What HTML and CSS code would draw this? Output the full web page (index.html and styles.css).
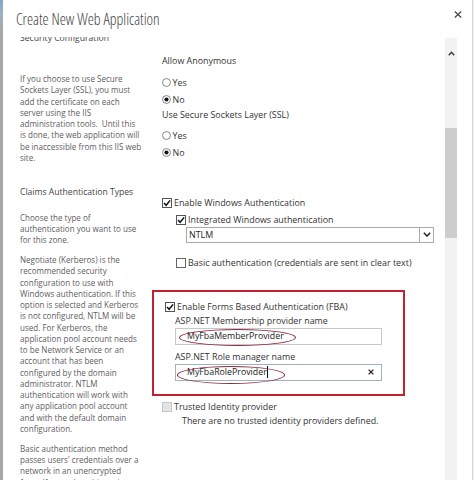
FILE: index.html
```html
<!DOCTYPE html>
<html lang="en">
<head>
<meta charset="utf-8">
<title>Create New Web Application</title>
<link rel="stylesheet" href="styles.css">
</head>
<body>
<div class="frame">
  <div class="edge-left"></div>
  <div class="dialog">
    <header class="dlg-head">
      <h1 class="dlg-title">Create New Web Application</h1>
      <svg class="close" viewBox="0 0 8 7" aria-label="Close"><path d="M0.8 0.5 L7.2 6.5 M7.2 0.5 L0.8 6.5" stroke="#4a4a4a" stroke-width="1.3" fill="none"/></svg>
    </header>
    <div class="dlg-body">
      <div class="viewport">
        <div class="scroller">
          <section class="sec sec-security">
            <div class="sec-left">
              <h2 class="sec-title">Security Configuration</h2>
              <p class="desc">If you choose to use Secure Sockets Layer (SSL), you must add the certificate on each server using the IIS administration tools.&nbsp; Until this is done, the web application will be inaccessible from this IIS web site.</p>
            </div>
            <div class="sec-right">
              <div class="label">Allow Anonymous</div>
              <div class="opts">
                <div class="opt"><svg class="rb" viewBox="0 0 10 10"><circle cx="5" cy="5" r="4.4" fill="#fff" stroke="#6a6a6a" stroke-width="0.9"/></svg>Yes</div>
                <div class="opt"><svg class="rb" viewBox="0 0 10 10"><circle cx="5" cy="5" r="4.4" fill="#fff" stroke="#6a6a6a" stroke-width="0.9"/><circle cx="5" cy="5" r="2.3" fill="#111"/></svg>No</div>
              </div>
              <div class="label">Use Secure Sockets Layer (SSL)</div>
              <div class="opts">
                <div class="opt"><svg class="rb" viewBox="0 0 10 10"><circle cx="5" cy="5" r="4.4" fill="#fff" stroke="#6a6a6a" stroke-width="0.9"/></svg>Yes</div>
                <div class="opt"><svg class="rb" viewBox="0 0 10 10"><circle cx="5" cy="5" r="4.4" fill="#fff" stroke="#6a6a6a" stroke-width="0.9"/><circle cx="5" cy="5" r="2.3" fill="#111"/></svg>No</div>
              </div>
            </div>
          </section>

          <section class="sec sec-claims">
            <div class="sec-left">
              <h2 class="sec-title">Claims Authentication Types</h2>
              <p class="desc">Choose the type of authentication you want to use for this zone.</p>
              <p class="desc">Negotiate (Kerberos) is the recommended security configuration to use with Windows authentication. If this option is selected and Kerberos is not configured, NTLM will be used. For Kerberos, the application pool account needs to be Network Service or an account that has been configured by the domain administrator. NTLM authentication will work with any application pool account and with the default domain configuration.</p>
              <p class="desc">Basic authentication method passes users' credentials over a network in an unencrypted form. If you select this option, ensure that SSL is enabled.</p>
            </div>
            <div class="sec-right">
              <div class="chk-row"><svg class="cb" viewBox="0 0 10 10"><rect x="0.5" y="0.5" width="9" height="9" fill="#fff" stroke="#555"/><path d="M2 5.1 L4.1 7.3 L8.1 2.4" stroke="#111" stroke-width="1.5" fill="none"/></svg>Enable Windows Authentication</div>
              <div class="chk-row indent row-integrated"><svg class="cb" viewBox="0 0 10 10"><rect x="0.5" y="0.5" width="9" height="9" fill="#fff" stroke="#555"/><path d="M2 5.1 L4.1 7.3 L8.1 2.4" stroke="#111" stroke-width="1.5" fill="none"/></svg>Integrated Windows authentication</div>
              <div class="select">
                <span class="select-text">NTLM</span>
                <span class="select-btn"><svg viewBox="0 0 8 5"><path d="M0.8 0.8 L4 4 L7.2 0.8" stroke="#222" stroke-width="1.5" fill="none"/></svg></span>
              </div>
              <div class="chk-row indent row-basic"><svg class="cb" viewBox="0 0 10 10"><rect x="0.5" y="0.5" width="9" height="9" fill="#fff" stroke="#666"/></svg>Basic authentication (credentials are sent in clear text)</div>

              <div class="fba">
                <div class="chk-row"><svg class="cb" viewBox="0 0 10 10"><rect x="0.5" y="0.5" width="9" height="9" fill="#fff" stroke="#555"/><path d="M2 5.1 L4.1 7.3 L8.1 2.4" stroke="#111" stroke-width="1.5" fill="none"/></svg>Enable Forms Based Authentication (FBA)</div>
                <div class="label sub">ASP.NET Membership provider name</div>
                <div class="field">
                  <span class="field-text">MyFbaMemberProvider</span>
                  <span class="mark mark-1"></span>
                </div>
                <div class="label sub label-role">ASP.NET Role manager name</div>
                <div class="field field-focus">
                  <span class="field-text">MyFbaRoleProvider</span><span class="caret"></span>
                  <svg class="clear" viewBox="0 0 6 6"><path d="M0.6 0.6 L5.4 5.4 M5.4 0.6 L0.6 5.4" stroke="#222" stroke-width="1.3" fill="none"/></svg>
                  <span class="mark mark-2"></span>
                </div>
              </div>

              <div class="chk-row row-trusted"><svg class="cb" viewBox="0 0 10 10"><rect x="0.5" y="0.5" width="9" height="9" fill="#e4e4e4" stroke="#c6c6c6"/></svg>Trusted Identity provider</div>
              <div class="note">There are no trusted identity providers defined.</div>
            </div>
          </section>
        </div>
      </div>
      <div class="scrollbar">
        <svg class="sb-up" viewBox="0 0 7 5"><path d="M0.8 4.2 L3.5 1.2 L6.2 4.2" stroke="#3a3a3a" stroke-width="1.4" fill="none"/></svg>
        <div class="sb-thumb"></div>
      </div>
    </div>
  </div>
  <div class="edge-right"></div>
</div>
</body>
</html>
```

FILE: styles.css
```css
* { box-sizing: border-box; }
html, body { margin: 0; padding: 0; }
body {
  background: #fff;
  font-family: "Open Sans", "Noto Sans", "DejaVu Sans", sans-serif;
  color: #333;
}

.frame {
  display: flex;
  width: 474px;
  height: 480px;
  overflow: hidden;
}
.edge-left {
  width: 3px;
  flex: none;
  background: linear-gradient(#7ea8c8 0, #9cb2c3 14px, #a8a8a8 30px, #a8a8a8 100%);
}
.edge-right {
  width: 2px;
  flex: none;
  background: linear-gradient(to right, #d3d5d7 0 1px, #eef3f7 1px);
}
.dialog {
  flex: 1;
  min-width: 0;
  display: flex;
  flex-direction: column;
  background: #fff;
}

/* header */
.dlg-head {
  height: 37px;
  flex: none;
  display: flex;
  justify-content: space-between;
  align-items: flex-start;
  padding: 0 10px 0 13px;
}
.dlg-title {
  margin: 9px 0 0;
  font-size: 15.5px;
  line-height: 20px;
  font-weight: 300;
  font-stretch: 87.5%;
  color: #444;
  white-space: nowrap;
}
.close {
  width: 8px;
  height: 7px;
  margin-top: 11px;
}

/* body */
.dlg-body {
  flex: 1;
  min-height: 0;
  display: flex;
}
.viewport {
  flex: 1;
  min-width: 0;
  overflow: hidden;
}
.scroller {
  margin-top: -6px;
  padding-left: 17px;
}
.scrollbar {
  width: 12px;
  flex: none;
  margin: 1px 15px 0 0;
  background: #f3f1f3;
  display: flex;
  flex-direction: column;
  align-items: center;
}
.sb-up {
  width: 7px;
  height: 5px;
  margin-top: 12.5px;
}
.sb-thumb {
  width: 12px;
  height: 110px;
  margin-top: 72.5px;
  background: #cdcdcd;
}

/* sections */
.sec {
  display: grid;
  grid-template-columns: 122px 1fr;
  column-gap: 20px;
  align-items: start;
}
.sec-claims { margin-top: 21.5px; }
.sec-title {
  margin: 0;
  font-size: 8.6px;
  line-height: 14px;
  font-weight: 400;
  color: #444;
  white-space: nowrap;
}
.desc {
  margin: 8.6px 0 0;
  font-size: 8.05px;
  line-height: 11.25px;
  color: #5e5e5e;
}
.sec-security .desc { margin-top: 28px; }
.sec-claims .sec-title + .desc { margin-top: 13.4px; }

.sec-security .sec-right { padding-top: 23px; }
.sec-claims .sec-right { padding-top: 11px; }

.label {
  font-size: 8.9px;
  line-height: 14px;
  color: #333;
  white-space: nowrap;
}
.opts { margin: 5.5px 0 0; }
.opts + .label { margin-top: 0; }
.opt {
  display: flex;
  align-items: center;
  gap: 1.5px;
  height: 17px;
  font-size: 8.9px;
  color: #333;
}
.rb { width: 9px; height: 9px; flex: none; }

.chk-row {
  display: flex;
  align-items: center;
  gap: 2px;
  height: 14px;
  font-size: 8.9px;
  color: #333;
  white-space: nowrap;
}
.cb { width: 10px; height: 10px; flex: none; }
.indent { margin-left: 14px; }
.row-integrated { margin-top: 3px; }
.row-basic { margin-top: 13px; }

.select {
  margin-left: 24px;
  width: 248px;
  height: 16px;
  border: 1px solid #a9a9a9;
  display: flex;
  align-items: center;
  justify-content: space-between;
  font-size: 8.9px;
  color: #222;
}
.select-text { padding-left: 2px; }
.select-btn {
  width: 14px;
  height: 14px;
  border-left: 1px solid #a9a9a9;
  display: flex;
  align-items: center;
  justify-content: center;
}
.select-btn svg { width: 8px; height: 5px; }

/* forms based auth box */
.fba {
  margin: 20px 0 0 -10px;
  width: 253px;
  border: 2px solid #c4202f;
  padding: 8px 0 13px 11px;
}
.sub { margin-left: 10px; }
.label-role { margin-top: 5px; }
.field {
  position: relative;
  margin-left: 10px;
  width: 207px;
  height: 17px;
  border: 1px solid #c8c8c8;
  padding-left: 11px;
  display: flex;
  align-items: center;
  font-size: 8.8px;
  color: #222;
}
.field-focus { border-color: #9fb1c0; }
.caret {
  width: 1px;
  height: 12px;
  background: #111;
}
.clear {
  width: 6px;
  height: 6px;
  margin-left: auto;
  margin-right: 7px;
}
.mark {
  position: absolute;
  border: 1px solid #8d2a3d;
  border-radius: 50%;
}
.mark-1 { left: 3px; top: 0; width: 117px; height: 17px; }
.mark-2 { left: 1px; top: 1px; width: 108px; height: 18px; }

.row-trusted { margin-top: 4px; }
.note {
  margin-left: 20px;
  font-size: 8.9px;
  line-height: 14px;
  color: #333;
  white-space: nowrap;
}
```
